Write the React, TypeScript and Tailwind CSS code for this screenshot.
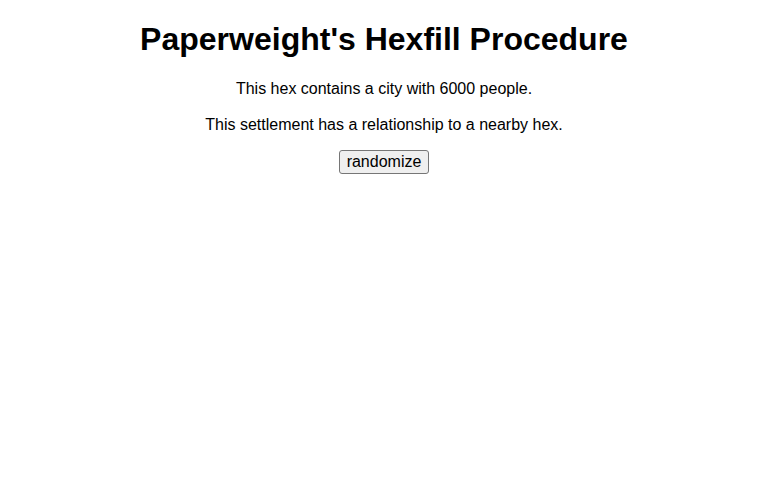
import { useState } from 'react'

const SIZES = [40, 150, 600, 1200, 3000, 6000, 12000]
const KINDS = ['village', 'town', 'city']
const LINKS = [
  'This settlement has a relationship to a nearby hex.',
  'This settlement is at war with a neighbour.',
  'This settlement trades with a distant hex.',
]

export default function App() {
  const [hex, setHex] = useState({ kind: 'city', people: 6000, link: LINKS[0] })

  const randomize = () => {
    const people = SIZES[Math.floor(Math.random() * SIZES.length)]
    const kind = people < 600 ? KINDS[0] : people < 3000 ? KINDS[1] : KINDS[2]
    setHex({ kind, people, link: LINKS[Math.floor(Math.random() * LINKS.length)] })
  }

  return (
    <div className="min-h-screen bg-white text-center text-black font-['Liberation_Sans',Arial,sans-serif]">
      <div className="pt-[21px]">
        <h1 className="text-[32px] leading-[37px] font-bold">Paperweight's Hexfill Procedure</h1>
        <p className="mt-[21px] text-[16px] leading-[20px]">
          This hex contains a {hex.kind} with {hex.people} people.
        </p>
        <p className="mt-[16px] text-[16px] leading-[20px]">{hex.link}</p>
        <div className="mt-[15px] flex justify-center">
          <button
            onClick={randomize}
            className="h-[24px] px-[7px] text-[16px] leading-[18px] bg-[#efefef] border border-[#767676] rounded-[3px] text-black"
          >
            randomize
          </button>
        </div>
      </div>
    </div>
  )
}
